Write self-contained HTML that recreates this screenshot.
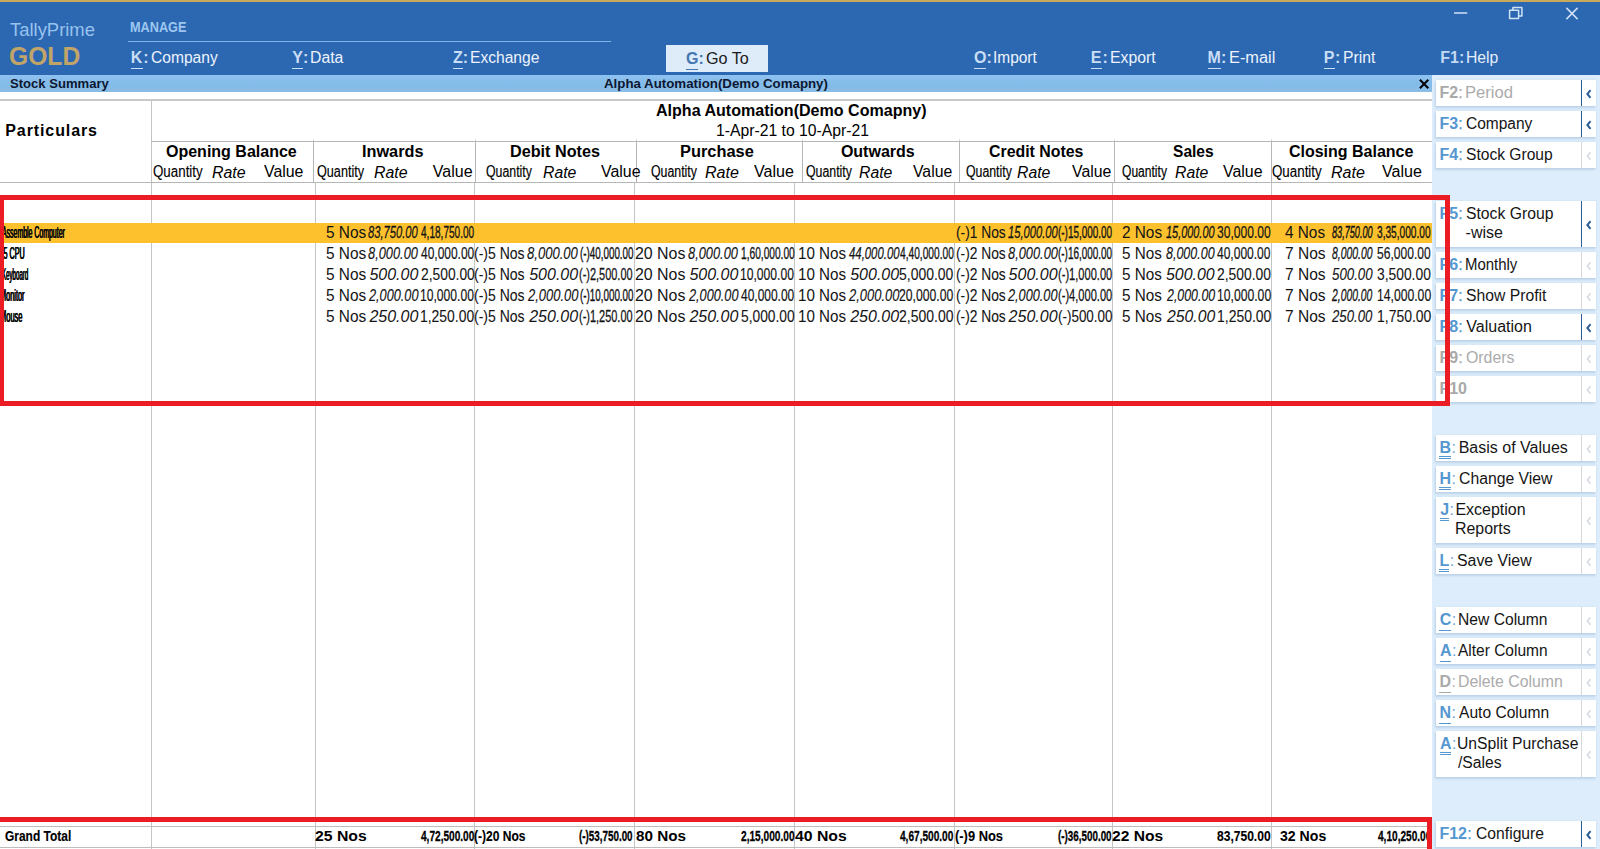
<!DOCTYPE html>
<html><head><meta charset="utf-8"><title>TallyPrime</title>
<style>
html,body{margin:0;padding:0;width:1600px;height:849px;overflow:hidden;background:#fff}
#root{position:absolute;left:0;top:0;width:1600px;height:849px;overflow:hidden;background:#fff;font-family:"Liberation Sans",sans-serif}
.btn{position:absolute;left:1436px;width:160px;background:#fff;box-shadow:-1px 2px 2px rgba(125,155,195,.30),0 0 2px rgba(125,155,195,.20)}
.sep{position:absolute;left:145px;top:0;bottom:0;width:1px}
</style></head><body><div id="root">
<div style="position:absolute;left:0px;top:0px;width:1600px;height:75px;background:#2C67B2;"></div>
<div style="position:absolute;left:0px;top:0px;width:1600px;height:2px;background:#C9A95C;"></div>
<div style="position:absolute;left:0px;top:75px;width:1432px;height:17px;background:#8CBCE8;background:linear-gradient(#8FC2F2 0%,#88BDEA 30%,#82BCE8 60%,#8CBCE4 100%);"></div>
<div style="position:absolute;left:1432px;top:75px;width:168px;height:774px;background:#DDEDFB;"></div>
<div style="position:absolute;left:128px;top:40.5px;width:483px;height:1px;background:#7FB4EA;"></div>
<div style="position:absolute;left:130.8px;top:68px;width:11.9547px;height:1px;background:#C9DEF5;"></div>
<div style="position:absolute;left:291.6px;top:68px;width:11.0719px;height:1px;background:#C9DEF5;"></div>
<div style="position:absolute;left:452.6px;top:68px;width:10.1734px;height:1px;background:#C9DEF5;"></div>
<div style="position:absolute;left:973.6px;top:68px;width:12.8453px;height:1px;background:#C9DEF5;"></div>
<div style="position:absolute;left:1090.8px;top:68px;width:11.0719px;height:1px;background:#C9DEF5;"></div>
<div style="position:absolute;left:1207.7px;top:68px;width:13.7281px;height:1px;background:#C9DEF5;"></div>
<div style="position:absolute;left:1323.8px;top:68px;width:11.0719px;height:1px;background:#C9DEF5;"></div>
<div style="position:absolute;left:666px;top:45px;width:102px;height:26.5px;background:#DEEBF9;"></div>
<div style="position:absolute;left:685.6px;top:69px;width:12.8453px;height:1px;background:#4478B2;"></div>
<svg style="position:absolute;left:1450px;top:2px" width="140" height="24" viewBox="0 0 140 24" fill="none" stroke="#CFE2F6" stroke-width="1.5"><path d="M4 11H17.3"/><path d="M59.6 8.3h9v8.3h-9z" stroke-linejoin="round"/><path d="M62.9 8.2V5.6h9v8.3h-3.1" stroke-linejoin="round"/><path d="M116.4 5.9l11.2 11.2M127.6 5.9l-11.2 11.2"/></svg>
<svg style="position:absolute;left:1418px;top:77px" width="13" height="13" viewBox="0 0 13 13" stroke="#05050a" stroke-width="2.1" fill="none"><path d="M1.9 2.8l8.4 8.4M10.3 2.8l-8.4 8.4"/></svg>
<div style="position:absolute;left:0px;top:99px;width:1432px;height:2px;background:#C9C9C9;"></div>
<div style="position:absolute;left:151px;top:101px;width:1px;height:748px;background:#C4C4C4;"></div>
<div style="position:absolute;left:151px;top:141px;width:1281px;height:1px;background:#B6B6B6;"></div>
<div style="position:absolute;left:313px;top:139px;width:1px;height:2px;background:#DADADA;"></div>
<div style="position:absolute;left:313px;top:141px;width:1px;height:41px;background:#B6B6B6;"></div>
<div style="position:absolute;left:475px;top:139px;width:1px;height:2px;background:#DADADA;"></div>
<div style="position:absolute;left:475px;top:141px;width:1px;height:41px;background:#B6B6B6;"></div>
<div style="position:absolute;left:636px;top:139px;width:1px;height:2px;background:#DADADA;"></div>
<div style="position:absolute;left:636px;top:141px;width:1px;height:41px;background:#B6B6B6;"></div>
<div style="position:absolute;left:802px;top:139px;width:1px;height:2px;background:#DADADA;"></div>
<div style="position:absolute;left:802px;top:141px;width:1px;height:41px;background:#B6B6B6;"></div>
<div style="position:absolute;left:959px;top:139px;width:1px;height:2px;background:#DADADA;"></div>
<div style="position:absolute;left:959px;top:141px;width:1px;height:41px;background:#B6B6B6;"></div>
<div style="position:absolute;left:1114px;top:139px;width:1px;height:2px;background:#DADADA;"></div>
<div style="position:absolute;left:1114px;top:141px;width:1px;height:41px;background:#B6B6B6;"></div>
<div style="position:absolute;left:1271px;top:139px;width:1px;height:2px;background:#DADADA;"></div>
<div style="position:absolute;left:1271px;top:141px;width:1px;height:41px;background:#B6B6B6;"></div>
<div style="position:absolute;left:0px;top:182px;width:1432px;height:1px;background:#B6B6B6;"></div>
<div style="position:absolute;left:315px;top:183px;width:1px;height:666px;background:#C4C4C4;"></div>
<div style="position:absolute;left:474px;top:183px;width:1px;height:666px;background:#C4C4C4;"></div>
<div style="position:absolute;left:633.5px;top:183px;width:1px;height:666px;background:#C4C4C4;"></div>
<div style="position:absolute;left:794px;top:183px;width:1px;height:666px;background:#C4C4C4;"></div>
<div style="position:absolute;left:954px;top:183px;width:1px;height:666px;background:#C4C4C4;"></div>
<div style="position:absolute;left:1112px;top:183px;width:1px;height:666px;background:#C4C4C4;"></div>
<div style="position:absolute;left:1271px;top:183px;width:1px;height:666px;background:#C4C4C4;"></div>
<div style="position:absolute;left:0px;top:826px;width:1432px;height:1px;background:#BDBDBD;"></div>
<div style="position:absolute;left:0px;top:847px;width:1432px;height:1px;background:#BDBDBD;"></div>
<div style="position:absolute;left:4px;top:223px;width:1428px;height:20px;background:#FDC12E;"></div>
<div class="btn" style="top:80px;height:26px"><div class="sep" style="background:#2F5E97"></div></div>
<svg style="position:absolute;left:1585.4px;top:88.1px" width="8" height="12" viewBox="0 0 8 12" fill="none" stroke="#2F5E97" stroke-width="2" stroke-linejoin="miter"><path d="M5.5 2.2L2.4 6l3.1 3.8"/></svg>
<div class="btn" style="top:111px;height:26px"><div class="sep" style="background:#2F5E97"></div></div>
<svg style="position:absolute;left:1585.4px;top:119.1px" width="8" height="12" viewBox="0 0 8 12" fill="none" stroke="#2F5E97" stroke-width="2" stroke-linejoin="miter"><path d="M5.5 2.2L2.4 6l3.1 3.8"/></svg>
<div class="btn" style="top:142px;height:26px"><div class="sep" style="background:#D5D8DC"></div></div>
<svg style="position:absolute;left:1585.4px;top:150.1px" width="8" height="12" viewBox="0 0 8 12" fill="none" stroke="#D3D9E0" stroke-width="1.5" stroke-linejoin="miter"><path d="M5.5 2.2L2.4 6l3.1 3.8"/></svg>
<div class="btn" style="top:201px;height:46px"><div class="sep" style="background:#2F5E97"></div></div>
<svg style="position:absolute;left:1585.4px;top:219.1px" width="8" height="12" viewBox="0 0 8 12" fill="none" stroke="#2F5E97" stroke-width="2" stroke-linejoin="miter"><path d="M5.5 2.2L2.4 6l3.1 3.8"/></svg>
<div class="btn" style="top:252px;height:26px"><div class="sep" style="background:#D5D8DC"></div></div>
<svg style="position:absolute;left:1585.4px;top:260.1px" width="8" height="12" viewBox="0 0 8 12" fill="none" stroke="#D3D9E0" stroke-width="1.5" stroke-linejoin="miter"><path d="M5.5 2.2L2.4 6l3.1 3.8"/></svg>
<div class="btn" style="top:283px;height:26px"><div class="sep" style="background:#D5D8DC"></div></div>
<svg style="position:absolute;left:1585.4px;top:291.1px" width="8" height="12" viewBox="0 0 8 12" fill="none" stroke="#D3D9E0" stroke-width="1.5" stroke-linejoin="miter"><path d="M5.5 2.2L2.4 6l3.1 3.8"/></svg>
<div class="btn" style="top:314px;height:26px"><div class="sep" style="background:#2F5E97"></div></div>
<svg style="position:absolute;left:1585.4px;top:322.1px" width="8" height="12" viewBox="0 0 8 12" fill="none" stroke="#2F5E97" stroke-width="2" stroke-linejoin="miter"><path d="M5.5 2.2L2.4 6l3.1 3.8"/></svg>
<div class="btn" style="top:345px;height:26px"><div class="sep" style="background:#D5D8DC"></div></div>
<svg style="position:absolute;left:1585.4px;top:353.1px" width="8" height="12" viewBox="0 0 8 12" fill="none" stroke="#D3D9E0" stroke-width="1.5" stroke-linejoin="miter"><path d="M5.5 2.2L2.4 6l3.1 3.8"/></svg>
<div class="btn" style="top:376px;height:26px"><div class="sep" style="background:#D5D8DC"></div></div>
<svg style="position:absolute;left:1585.4px;top:384.1px" width="8" height="12" viewBox="0 0 8 12" fill="none" stroke="#D3D9E0" stroke-width="1.5" stroke-linejoin="miter"><path d="M5.5 2.2L2.4 6l3.1 3.8"/></svg>
<div class="btn" style="top:435px;height:26px"><div class="sep" style="background:#D5D8DC"></div></div>
<svg style="position:absolute;left:1585.4px;top:443.1px" width="8" height="12" viewBox="0 0 8 12" fill="none" stroke="#D3D9E0" stroke-width="1.5" stroke-linejoin="miter"><path d="M5.5 2.2L2.4 6l3.1 3.8"/></svg>
<div style="position:absolute;left:1439px;top:456px;width:11.8547px;height:1px;background:#5597D0;"></div>
<div style="position:absolute;left:1439px;top:458px;width:11.8547px;height:1px;background:#5597D0;"></div>
<div class="btn" style="top:466px;height:26px"><div class="sep" style="background:#D5D8DC"></div></div>
<svg style="position:absolute;left:1585.4px;top:474.1px" width="8" height="12" viewBox="0 0 8 12" fill="none" stroke="#D3D9E0" stroke-width="1.5" stroke-linejoin="miter"><path d="M5.5 2.2L2.4 6l3.1 3.8"/></svg>
<div style="position:absolute;left:1439px;top:487px;width:11.8547px;height:1px;background:#5597D0;"></div>
<div style="position:absolute;left:1439px;top:489px;width:11.8547px;height:1px;background:#5597D0;"></div>
<div class="btn" style="top:497px;height:46px"><div class="sep" style="background:#D5D8DC"></div></div>
<svg style="position:absolute;left:1585.4px;top:515.1px" width="8" height="12" viewBox="0 0 8 12" fill="none" stroke="#D3D9E0" stroke-width="1.5" stroke-linejoin="miter"><path d="M5.5 2.2L2.4 6l3.1 3.8"/></svg>
<div style="position:absolute;left:1439.8px;top:518px;width:9.19844px;height:1px;background:#5597D0;"></div>
<div style="position:absolute;left:1439.8px;top:520px;width:9.19844px;height:1px;background:#5597D0;"></div>
<div class="btn" style="top:548px;height:26px"><div class="sep" style="background:#D5D8DC"></div></div>
<svg style="position:absolute;left:1585.4px;top:556.1px" width="8" height="12" viewBox="0 0 8 12" fill="none" stroke="#D3D9E0" stroke-width="1.5" stroke-linejoin="miter"><path d="M5.5 2.2L2.4 6l3.1 3.8"/></svg>
<div style="position:absolute;left:1439px;top:569px;width:10.0734px;height:1px;background:#5597D0;"></div>
<div style="position:absolute;left:1439px;top:571px;width:10.0734px;height:1px;background:#5597D0;"></div>
<div class="btn" style="top:607px;height:26px"><div class="sep" style="background:#D5D8DC"></div></div>
<svg style="position:absolute;left:1585.4px;top:615.1px" width="8" height="12" viewBox="0 0 8 12" fill="none" stroke="#D3D9E0" stroke-width="1.5" stroke-linejoin="miter"><path d="M5.5 2.2L2.4 6l3.1 3.8"/></svg>
<div style="position:absolute;left:1439.4px;top:630px;width:11.8547px;height:1px;background:#5597D0;"></div>
<div class="btn" style="top:638px;height:26px"><div class="sep" style="background:#D5D8DC"></div></div>
<svg style="position:absolute;left:1585.4px;top:646.1px" width="8" height="12" viewBox="0 0 8 12" fill="none" stroke="#D3D9E0" stroke-width="1.5" stroke-linejoin="miter"><path d="M5.5 2.2L2.4 6l3.1 3.8"/></svg>
<div style="position:absolute;left:1439.6px;top:661px;width:11.8547px;height:1px;background:#5597D0;"></div>
<div class="btn" style="top:669px;height:26px"><div class="sep" style="background:#D5D8DC"></div></div>
<svg style="position:absolute;left:1585.4px;top:677.1px" width="8" height="12" viewBox="0 0 8 12" fill="none" stroke="#D3D9E0" stroke-width="1.5" stroke-linejoin="miter"><path d="M5.5 2.2L2.4 6l3.1 3.8"/></svg>
<div style="position:absolute;left:1439px;top:692px;width:11.8547px;height:1px;background:#A9A9A9;"></div>
<div class="btn" style="top:700px;height:26px"><div class="sep" style="background:#D5D8DC"></div></div>
<svg style="position:absolute;left:1585.4px;top:708.1px" width="8" height="12" viewBox="0 0 8 12" fill="none" stroke="#D3D9E0" stroke-width="1.5" stroke-linejoin="miter"><path d="M5.5 2.2L2.4 6l3.1 3.8"/></svg>
<div style="position:absolute;left:1439px;top:723px;width:11.8547px;height:1px;background:#5597D0;"></div>
<div class="btn" style="top:731px;height:46px"><div class="sep" style="background:#D5D8DC"></div></div>
<svg style="position:absolute;left:1585.4px;top:749.1px" width="8" height="12" viewBox="0 0 8 12" fill="none" stroke="#D3D9E0" stroke-width="1.5" stroke-linejoin="miter"><path d="M5.5 2.2L2.4 6l3.1 3.8"/></svg>
<div style="position:absolute;left:1439.6px;top:752px;width:11.8547px;height:1px;background:#5597D0;"></div>
<div style="position:absolute;left:1439.6px;top:754px;width:11.8547px;height:1px;background:#5597D0;"></div>
<div class="btn" style="top:821px;height:26px"><div class="sep" style="background:#2F5E97"></div></div>
<svg style="position:absolute;left:1585.4px;top:829.1px" width="8" height="12" viewBox="0 0 8 12" fill="none" stroke="#2F5E97" stroke-width="2" stroke-linejoin="miter"><path d="M5.5 2.2L2.4 6l3.1 3.8"/></svg>
<span style="position:absolute;white-space:pre;line-height:20px;font-size:17.5px;font-weight:400;font-style:normal;color:#97C2EE;left:9.65px;top:20px;transform:scaleX(1.0524);transform-origin:0 0;">TallyPrime</span>
<span style="position:absolute;white-space:pre;line-height:20px;font-size:25px;font-weight:700;font-style:normal;color:#C0A468;left:9.08px;top:46px;transform:scaleX(0.9856);transform-origin:0 0;">GOLD</span>
<span style="position:absolute;white-space:pre;line-height:20px;font-size:14px;font-weight:700;font-style:normal;color:#9CC6F0;left:129.71px;top:17px;transform:scaleX(0.9077);transform-origin:0 0;-webkit-text-stroke:0.06px #9CC6F0;">MANAGE</span>
<span style="position:absolute;white-space:pre;line-height:20px;font-size:16px;font-weight:700;font-style:normal;color:#C9DEF5;left:130.70px;top:48px;">K</span>
<span style="position:absolute;white-space:pre;line-height:20px;font-size:16px;font-weight:700;font-style:normal;color:#C9DEF5;left:143.30px;top:48px;">:</span>
<span style="position:absolute;white-space:pre;line-height:20px;font-size:16px;font-weight:400;font-style:normal;color:#ECF3FC;left:151.22px;top:48px;transform:scaleX(0.9749);transform-origin:0 0;">Company</span>
<span style="position:absolute;white-space:pre;line-height:20px;font-size:16px;font-weight:700;font-style:normal;color:#C9DEF5;left:292.30px;top:48px;">Y</span>
<span style="position:absolute;white-space:pre;line-height:20px;font-size:16px;font-weight:700;font-style:normal;color:#C9DEF5;left:303.10px;top:48px;">:</span>
<span style="position:absolute;white-space:pre;line-height:20px;font-size:16px;font-weight:400;font-style:normal;color:#ECF3FC;left:309.72px;top:48px;transform:scaleX(0.9846);transform-origin:0 0;">Data</span>
<span style="position:absolute;white-space:pre;line-height:20px;font-size:16px;font-weight:700;font-style:normal;color:#C9DEF5;left:453.10px;top:48px;">Z</span>
<span style="position:absolute;white-space:pre;line-height:20px;font-size:16px;font-weight:700;font-style:normal;color:#C9DEF5;left:462.70px;top:48px;">:</span>
<span style="position:absolute;white-space:pre;line-height:20px;font-size:16px;font-weight:400;font-style:normal;color:#ECF3FC;left:470.23px;top:48px;transform:scaleX(0.9754);transform-origin:0 0;">Exchange</span>
<span style="position:absolute;white-space:pre;line-height:20px;font-size:16px;font-weight:700;font-style:normal;color:#C9DEF5;left:973.90px;top:48px;">O</span>
<span style="position:absolute;white-space:pre;line-height:20px;font-size:16px;font-weight:700;font-style:normal;color:#C9DEF5;left:986.40px;top:48px;">:</span>
<span style="position:absolute;white-space:pre;line-height:20px;font-size:16px;font-weight:400;font-style:normal;color:#ECF3FC;left:993.25px;top:48px;transform:scaleX(0.9658);transform-origin:0 0;-webkit-text-stroke:0.02px #ECF3FC;">Import</span>
<span style="position:absolute;white-space:pre;line-height:20px;font-size:16px;font-weight:700;font-style:normal;color:#C9DEF5;left:1090.70px;top:48px;">E</span>
<span style="position:absolute;white-space:pre;line-height:20px;font-size:16px;font-weight:700;font-style:normal;color:#C9DEF5;left:1102.40px;top:48px;">:</span>
<span style="position:absolute;white-space:pre;line-height:20px;font-size:16px;font-weight:400;font-style:normal;color:#ECF3FC;left:1109.72px;top:48px;transform:scaleX(0.9866);transform-origin:0 0;">Export</span>
<span style="position:absolute;white-space:pre;line-height:20px;font-size:16px;font-weight:700;font-style:normal;color:#C9DEF5;left:1207.60px;top:48px;">M</span>
<span style="position:absolute;white-space:pre;line-height:20px;font-size:16px;font-weight:700;font-style:normal;color:#C9DEF5;left:1220.90px;top:48px;">:</span>
<span style="position:absolute;white-space:pre;line-height:20px;font-size:16px;font-weight:400;font-style:normal;color:#ECF3FC;left:1228.67px;top:48px;transform:scaleX(1.0233);transform-origin:0 0;">E-mail</span>
<span style="position:absolute;white-space:pre;line-height:20px;font-size:16px;font-weight:700;font-style:normal;color:#C9DEF5;left:1323.70px;top:48px;">P</span>
<span style="position:absolute;white-space:pre;line-height:20px;font-size:16px;font-weight:700;font-style:normal;color:#C9DEF5;left:1335.10px;top:48px;">:</span>
<span style="position:absolute;white-space:pre;line-height:20px;font-size:16px;font-weight:400;font-style:normal;color:#ECF3FC;left:1343.02px;top:48px;transform:scaleX(0.9810);transform-origin:0 0;">Print</span>
<span style="position:absolute;white-space:pre;line-height:20px;font-size:16px;font-weight:700;font-style:normal;color:#C3DAF3;left:1440.30px;top:48px;">F1:</span>
<span style="position:absolute;white-space:pre;line-height:20px;font-size:16px;font-weight:400;font-style:normal;color:#E4EEFA;left:1466.22px;top:48px;transform:scaleX(0.9839);transform-origin:0 0;">Help</span>
<span style="position:absolute;white-space:pre;line-height:20px;font-size:16px;font-weight:700;font-style:normal;color:#4478B2;left:685.90px;top:49px;">G</span>
<span style="position:absolute;white-space:pre;line-height:20px;font-size:16px;font-weight:700;font-style:normal;color:#4478B2;left:698.40px;top:49px;">:</span>
<span style="position:absolute;white-space:pre;line-height:20px;font-size:16px;font-weight:400;font-style:normal;color:#1b1b1b;left:706.49px;top:49px;transform:scaleX(1.0098);transform-origin:0 0;">Go To</span>
<span style="position:absolute;white-space:pre;line-height:20px;font-size:13px;font-weight:700;font-style:normal;color:#0e1630;left:9.67px;top:74px;transform:scaleX(1.0061);transform-origin:0 0;">Stock Summary</span>
<span style="position:absolute;white-space:pre;line-height:20px;font-size:13px;font-weight:700;font-style:normal;color:#0e1630;left:603.67px;top:74px;transform:scaleX(1.0222);transform-origin:0 0;">Alpha Automation(Demo Comapny)</span>
<span style="position:absolute;white-space:pre;line-height:20px;font-size:16px;font-weight:700;font-style:normal;color:#000;letter-spacing:0.9px;left:5.30px;top:121px;">Particulars</span>
<span style="position:absolute;white-space:pre;line-height:20px;font-size:16px;font-weight:700;font-style:normal;color:#000;left:656.20px;top:101px;transform:scaleX(1.0034);transform-origin:0 0;">Alpha Automation(Demo Comapny)</span>
<span style="position:absolute;white-space:pre;line-height:20px;font-size:16px;font-weight:400;font-style:normal;color:#000;left:715.62px;top:121px;transform:scaleX(0.9837);transform-origin:0 0;">1-Apr-21 to 10-Apr-21</span>
<span style="position:absolute;white-space:pre;line-height:20px;font-size:16px;font-weight:700;font-style:normal;color:#000;left:166.00px;top:142px;">Opening Balance</span>
<span style="position:absolute;white-space:pre;line-height:20px;font-size:16px;font-weight:400;font-style:normal;color:#000;left:152.92px;top:162px;transform:scaleX(0.8336);transform-origin:0 0;-webkit-text-stroke:0.12px #000;">Quantity</span>
<span style="position:absolute;white-space:pre;line-height:20px;font-size:16px;font-weight:400;font-style:italic;color:#000;left:211.60px;top:163px;transform:scaleX(0.9939);transform-origin:0 0;">Rate</span>
<span style="position:absolute;white-space:pre;line-height:20px;font-size:16px;font-weight:400;font-style:normal;color:#000;left:263.90px;top:162px;transform:scaleX(0.9923);transform-origin:0 0;">Value</span>
<span style="position:absolute;white-space:pre;line-height:20px;font-size:16px;font-weight:700;font-style:normal;color:#000;left:362.38px;top:142px;transform:scaleX(1.0170);transform-origin:0 0;">Inwards</span>
<span style="position:absolute;white-space:pre;line-height:20px;font-size:16px;font-weight:400;font-style:normal;color:#000;left:316.95px;top:162px;transform:scaleX(0.7895);transform-origin:0 0;-webkit-text-stroke:0.16px #000;">Quantity</span>
<span style="position:absolute;white-space:pre;line-height:20px;font-size:16px;font-weight:400;font-style:italic;color:#000;left:373.80px;top:163px;transform:scaleX(0.9939);transform-origin:0 0;">Rate</span>
<span style="position:absolute;white-space:pre;line-height:20px;font-size:16px;font-weight:400;font-style:normal;color:#000;left:432.80px;top:162px;">Value</span>
<span style="position:absolute;white-space:pre;line-height:20px;font-size:16px;font-weight:700;font-style:normal;color:#000;left:510.19px;top:142px;transform:scaleX(1.0115);transform-origin:0 0;">Debit Notes</span>
<span style="position:absolute;white-space:pre;line-height:20px;font-size:16px;font-weight:400;font-style:normal;color:#000;left:485.96px;top:162px;transform:scaleX(0.7708);transform-origin:0 0;-webkit-text-stroke:0.18px #000;">Quantity</span>
<span style="position:absolute;white-space:pre;line-height:20px;font-size:16px;font-weight:400;font-style:italic;color:#000;left:542.81px;top:163px;transform:scaleX(0.9848);transform-origin:0 0;">Rate</span>
<span style="position:absolute;white-space:pre;line-height:20px;font-size:16px;font-weight:400;font-style:normal;color:#000;left:601.00px;top:162px;transform:scaleX(0.9949);transform-origin:0 0;">Value</span>
<span style="position:absolute;white-space:pre;line-height:20px;font-size:16px;font-weight:700;font-style:normal;color:#000;left:680.28px;top:142px;transform:scaleX(1.0241);transform-origin:0 0;">Purchase</span>
<span style="position:absolute;white-space:pre;line-height:20px;font-size:16px;font-weight:400;font-style:normal;color:#000;left:650.86px;top:162px;transform:scaleX(0.7708);transform-origin:0 0;-webkit-text-stroke:0.18px #000;">Quantity</span>
<span style="position:absolute;white-space:pre;line-height:20px;font-size:16px;font-weight:400;font-style:italic;color:#000;left:704.60px;top:163px;transform:scaleX(1.0030);transform-origin:0 0;">Rate</span>
<span style="position:absolute;white-space:pre;line-height:20px;font-size:16px;font-weight:400;font-style:normal;color:#000;left:753.50px;top:162px;transform:scaleX(1.0051);transform-origin:0 0;">Value</span>
<span style="position:absolute;white-space:pre;line-height:20px;font-size:16px;font-weight:700;font-style:normal;color:#000;left:840.90px;top:142px;">Outwards</span>
<span style="position:absolute;white-space:pre;line-height:20px;font-size:16px;font-weight:400;font-style:normal;color:#000;left:805.96px;top:162px;transform:scaleX(0.7708);transform-origin:0 0;-webkit-text-stroke:0.18px #000;">Quantity</span>
<span style="position:absolute;white-space:pre;line-height:20px;font-size:16px;font-weight:400;font-style:italic;color:#000;left:858.61px;top:163px;transform:scaleX(0.9848);transform-origin:0 0;">Rate</span>
<span style="position:absolute;white-space:pre;line-height:20px;font-size:16px;font-weight:400;font-style:normal;color:#000;left:912.70px;top:162px;transform:scaleX(0.9872);transform-origin:0 0;">Value</span>
<span style="position:absolute;white-space:pre;line-height:20px;font-size:16px;font-weight:700;font-style:normal;color:#000;left:989.00px;top:142px;transform:scaleX(0.9925);transform-origin:0 0;">Credit Notes</span>
<span style="position:absolute;white-space:pre;line-height:20px;font-size:16px;font-weight:400;font-style:normal;color:#000;left:965.76px;top:162px;transform:scaleX(0.7691);transform-origin:0 0;-webkit-text-stroke:0.18px #000;">Quantity</span>
<span style="position:absolute;white-space:pre;line-height:20px;font-size:16px;font-weight:400;font-style:italic;color:#000;left:1017.41px;top:163px;transform:scaleX(0.9848);transform-origin:0 0;">Rate</span>
<span style="position:absolute;white-space:pre;line-height:20px;font-size:16px;font-weight:400;font-style:normal;color:#000;left:1072.00px;top:162px;transform:scaleX(0.9897);transform-origin:0 0;">Value</span>
<span style="position:absolute;white-space:pre;line-height:20px;font-size:16px;font-weight:700;font-style:normal;color:#000;left:1173.11px;top:142px;transform:scaleX(0.9730);transform-origin:0 0;">Sales</span>
<span style="position:absolute;white-space:pre;line-height:20px;font-size:16px;font-weight:400;font-style:normal;color:#000;left:1121.97px;top:162px;transform:scaleX(0.7538);transform-origin:0 0;-webkit-text-stroke:0.20px #000;">Quantity</span>
<span style="position:absolute;white-space:pre;line-height:20px;font-size:16px;font-weight:400;font-style:italic;color:#000;left:1174.71px;top:163px;transform:scaleX(0.9848);transform-origin:0 0;">Rate</span>
<span style="position:absolute;white-space:pre;line-height:20px;font-size:16px;font-weight:400;font-style:normal;color:#000;left:1222.50px;top:162px;transform:scaleX(0.9949);transform-origin:0 0;">Value</span>
<span style="position:absolute;white-space:pre;line-height:20px;font-size:16px;font-weight:700;font-style:normal;color:#000;left:1288.90px;top:142px;">Closing Balance</span>
<span style="position:absolute;white-space:pre;line-height:20px;font-size:16px;font-weight:400;font-style:normal;color:#000;left:1272.42px;top:162px;transform:scaleX(0.8336);transform-origin:0 0;-webkit-text-stroke:0.12px #000;">Quantity</span>
<span style="position:absolute;white-space:pre;line-height:20px;font-size:16px;font-weight:400;font-style:italic;color:#000;left:1331.40px;top:163px;transform:scaleX(1.0030);transform-origin:0 0;">Rate</span>
<span style="position:absolute;white-space:pre;line-height:20px;font-size:16px;font-weight:400;font-style:normal;color:#000;left:1382.30px;top:162px;transform:scaleX(1.0051);transform-origin:0 0;">Value</span>
<span style="position:absolute;white-space:pre;line-height:20px;font-size:16px;font-weight:400;font-style:normal;color:#0a0a0a;left:1.80px;top:223px;transform:scaleX(0.4333);transform-origin:0 0;-webkit-text-stroke:0.20px #0a0a0a;text-shadow:0.55px 0 0 #111,-0.55px 0 0 #111;">Assemble Computer</span>
<span style="position:absolute;white-space:pre;line-height:20px;font-size:16px;font-weight:400;font-style:normal;color:#0a0a0a;left:1.75px;top:244px;transform:scaleX(0.4495);transform-origin:0 0;-webkit-text-stroke:0.20px #0a0a0a;text-shadow:0.55px 0 0 #111,-0.55px 0 0 #111;">i5 CPU</span>
<span style="position:absolute;white-space:pre;line-height:20px;font-size:16px;font-weight:400;font-style:normal;color:#0a0a0a;left:1.70px;top:265px;transform:scaleX(0.3837);transform-origin:0 0;-webkit-text-stroke:0.20px #0a0a0a;text-shadow:0.55px 0 0 #111,-0.55px 0 0 #111;">Keyboard</span>
<span style="position:absolute;white-space:pre;line-height:20px;font-size:16px;font-weight:400;font-style:normal;color:#0a0a0a;left:0.20px;top:286px;transform:scaleX(0.4595);transform-origin:0 0;-webkit-text-stroke:0.20px #0a0a0a;text-shadow:0.55px 0 0 #111,-0.55px 0 0 #111;">Monitor</span>
<span style="position:absolute;white-space:pre;line-height:20px;font-size:16px;font-weight:400;font-style:normal;color:#0a0a0a;left:-0.31px;top:307px;transform:scaleX(0.4674);transform-origin:0 0;-webkit-text-stroke:0.20px #0a0a0a;text-shadow:0.55px 0 0 #111,-0.55px 0 0 #111;">Mouse</span>
<span style="position:absolute;white-space:pre;line-height:20px;font-size:16px;font-weight:400;font-style:normal;color:#141414;left:325.92px;top:223px;transform:scaleX(0.9631);transform-origin:0 0;-webkit-text-stroke:0.02px #141414;">5 Nos</span>
<span style="position:absolute;white-space:pre;line-height:20px;font-size:16px;font-weight:400;font-style:italic;color:#141414;left:368.42px;top:223px;transform:scaleX(0.7001);transform-origin:0 0;-webkit-text-stroke:0.26px #141414;">83,750.00</span>
<span style="position:absolute;white-space:pre;line-height:20px;font-size:16px;font-weight:400;font-style:normal;color:#141414;left:421.11px;top:223px;transform:scaleX(0.6292);transform-origin:0 0;-webkit-text-stroke:0.35px #141414;">4,18,750.00</span>
<span style="position:absolute;white-space:pre;line-height:20px;font-size:16px;font-weight:400;font-style:normal;color:#141414;left:955.53px;top:223px;transform:scaleX(0.8599);transform-origin:0 0;-webkit-text-stroke:0.10px #141414;">(-)1 Nos</span>
<span style="position:absolute;white-space:pre;line-height:20px;font-size:16px;font-weight:400;font-style:italic;color:#141414;left:1007.62px;top:223px;transform:scaleX(0.7001);transform-origin:0 0;-webkit-text-stroke:0.26px #141414;">15,000.00</span>
<span style="position:absolute;white-space:pre;line-height:20px;font-size:16px;font-weight:400;font-style:normal;color:#141414;left:1057.84px;top:223px;transform:scaleX(0.6208);transform-origin:0 0;-webkit-text-stroke:0.37px #141414;">(-)15,000.00</span>
<span style="position:absolute;white-space:pre;line-height:20px;font-size:16px;font-weight:400;font-style:normal;color:#141414;left:1121.93px;top:223px;transform:scaleX(0.9580);transform-origin:0 0;-webkit-text-stroke:0.03px #141414;">2 Nos</span>
<span style="position:absolute;white-space:pre;line-height:20px;font-size:16px;font-weight:400;font-style:italic;color:#141414;left:1166.23px;top:223px;transform:scaleX(0.6818);transform-origin:0 0;-webkit-text-stroke:0.28px #141414;">15,000.00</span>
<span style="position:absolute;white-space:pre;line-height:20px;font-size:16px;font-weight:400;font-style:normal;color:#141414;left:1217.15px;top:223px;transform:scaleX(0.7543);transform-origin:0 0;-webkit-text-stroke:0.20px #141414;">30,000.00</span>
<span style="position:absolute;white-space:pre;line-height:20px;font-size:16px;font-weight:400;font-style:normal;color:#141414;left:1285.41px;top:223px;transform:scaleX(0.9585);transform-origin:0 0;-webkit-text-stroke:0.03px #141414;">4 Nos</span>
<span style="position:absolute;white-space:pre;line-height:20px;font-size:16px;font-weight:400;font-style:italic;color:#141414;left:1331.57px;top:223px;transform:scaleX(0.5700);transform-origin:0 0;-webkit-text-stroke:0.45px #141414;">83,750.00</span>
<span style="position:absolute;white-space:pre;line-height:20px;font-size:16px;font-weight:400;font-style:normal;color:#141414;left:1377.42px;top:223px;transform:scaleX(0.6339);transform-origin:0 0;-webkit-text-stroke:0.35px #141414;">3,35,000.00</span>
<span style="position:absolute;white-space:pre;line-height:20px;font-size:16px;font-weight:400;font-style:normal;color:#141414;left:325.92px;top:244px;transform:scaleX(0.9631);transform-origin:0 0;-webkit-text-stroke:0.02px #141414;">5 Nos</span>
<span style="position:absolute;white-space:pre;line-height:20px;font-size:16px;font-weight:400;font-style:italic;color:#141414;left:368.38px;top:244px;transform:scaleX(0.8010);transform-origin:0 0;-webkit-text-stroke:0.15px #141414;">8,000.00</span>
<span style="position:absolute;white-space:pre;line-height:20px;font-size:16px;font-weight:400;font-style:normal;color:#141414;left:421.08px;top:244px;transform:scaleX(0.7482);transform-origin:0 0;-webkit-text-stroke:0.20px #141414;">40,000.00</span>
<span style="position:absolute;white-space:pre;line-height:20px;font-size:16px;font-weight:400;font-style:normal;color:#141414;left:474.21px;top:244px;transform:scaleX(0.8759);transform-origin:0 0;-webkit-text-stroke:0.09px #141414;">(-)5 Nos</span>
<span style="position:absolute;white-space:pre;line-height:20px;font-size:16px;font-weight:400;font-style:italic;color:#141414;left:527.17px;top:244px;transform:scaleX(0.8172);transform-origin:0 0;-webkit-text-stroke:0.13px #141414;">8,000.00</span>
<span style="position:absolute;white-space:pre;line-height:20px;font-size:16px;font-weight:400;font-style:normal;color:#141414;left:579.55px;top:244px;transform:scaleX(0.6138);transform-origin:0 0;-webkit-text-stroke:0.38px #141414;">(-)40,000.00</span>
<span style="position:absolute;white-space:pre;line-height:20px;font-size:16px;font-weight:400;font-style:normal;color:#141414;left:635.40px;top:244px;transform:scaleX(0.9939);transform-origin:0 0;">20 Nos</span>
<span style="position:absolute;white-space:pre;line-height:20px;font-size:16px;font-weight:400;font-style:italic;color:#141414;left:688.38px;top:244px;transform:scaleX(0.8010);transform-origin:0 0;-webkit-text-stroke:0.15px #141414;">8,000.00</span>
<span style="position:absolute;white-space:pre;line-height:20px;font-size:16px;font-weight:400;font-style:normal;color:#141414;left:740.54px;top:244px;transform:scaleX(0.6360);transform-origin:0 0;-webkit-text-stroke:0.34px #141414;">1,60,000.00</span>
<span style="position:absolute;white-space:pre;line-height:20px;font-size:16px;font-weight:400;font-style:normal;color:#141414;left:797.86px;top:244px;transform:scaleX(0.9490);transform-origin:0 0;-webkit-text-stroke:0.03px #141414;">10 Nos</span>
<span style="position:absolute;white-space:pre;line-height:20px;font-size:16px;font-weight:400;font-style:italic;color:#141414;left:848.53px;top:244px;transform:scaleX(0.7099);transform-origin:0 0;-webkit-text-stroke:0.25px #141414;">44,000.00</span>
<span style="position:absolute;white-space:pre;line-height:20px;font-size:16px;font-weight:400;font-style:normal;color:#141414;left:899.81px;top:244px;transform:scaleX(0.6376);transform-origin:0 0;-webkit-text-stroke:0.34px #141414;">4,40,000.00</span>
<span style="position:absolute;white-space:pre;line-height:20px;font-size:16px;font-weight:400;font-style:normal;color:#141414;left:955.53px;top:244px;transform:scaleX(0.8599);transform-origin:0 0;-webkit-text-stroke:0.10px #141414;">(-)2 Nos</span>
<span style="position:absolute;white-space:pre;line-height:20px;font-size:16px;font-weight:400;font-style:italic;color:#141414;left:1007.58px;top:244px;transform:scaleX(0.8010);transform-origin:0 0;-webkit-text-stroke:0.15px #141414;">8,000.00</span>
<span style="position:absolute;white-space:pre;line-height:20px;font-size:16px;font-weight:400;font-style:normal;color:#141414;left:1057.84px;top:244px;transform:scaleX(0.6208);transform-origin:0 0;-webkit-text-stroke:0.37px #141414;">(-)16,000.00</span>
<span style="position:absolute;white-space:pre;line-height:20px;font-size:16px;font-weight:400;font-style:normal;color:#141414;left:1122.13px;top:244px;transform:scaleX(0.9533);transform-origin:0 0;-webkit-text-stroke:0.03px #141414;">5 Nos</span>
<span style="position:absolute;white-space:pre;line-height:20px;font-size:16px;font-weight:400;font-style:italic;color:#141414;left:1166.19px;top:244px;transform:scaleX(0.7799);transform-origin:0 0;-webkit-text-stroke:0.17px #141414;">8,000.00</span>
<span style="position:absolute;white-space:pre;line-height:20px;font-size:16px;font-weight:400;font-style:normal;color:#141414;left:1217.37px;top:244px;transform:scaleX(0.7511);transform-origin:0 0;-webkit-text-stroke:0.20px #141414;">40,000.00</span>
<span style="position:absolute;white-space:pre;line-height:20px;font-size:16px;font-weight:400;font-style:normal;color:#141414;left:1284.92px;top:244px;transform:scaleX(0.9704);transform-origin:0 0;">7 Nos</span>
<span style="position:absolute;white-space:pre;line-height:20px;font-size:16px;font-weight:400;font-style:italic;color:#141414;left:1331.54px;top:244px;transform:scaleX(0.6521);transform-origin:0 0;-webkit-text-stroke:0.32px #141414;">8,000.00</span>
<span style="position:absolute;white-space:pre;line-height:20px;font-size:16px;font-weight:400;font-style:normal;color:#141414;left:1377.35px;top:244px;transform:scaleX(0.7543);transform-origin:0 0;-webkit-text-stroke:0.20px #141414;">56,000.00</span>
<span style="position:absolute;white-space:pre;line-height:20px;font-size:16px;font-weight:400;font-style:normal;color:#141414;left:325.92px;top:265px;transform:scaleX(0.9631);transform-origin:0 0;-webkit-text-stroke:0.02px #141414;">5 Nos</span>
<span style="position:absolute;white-space:pre;line-height:20px;font-size:16px;font-weight:400;font-style:italic;color:#141414;left:369.40px;top:265px;">500.00</span>
<span style="position:absolute;white-space:pre;line-height:20px;font-size:16px;font-weight:400;font-style:normal;color:#141414;left:420.61px;top:265px;transform:scaleX(0.8637);transform-origin:0 0;-webkit-text-stroke:0.09px #141414;">2,500.00</span>
<span style="position:absolute;white-space:pre;line-height:20px;font-size:16px;font-weight:400;font-style:normal;color:#141414;left:474.21px;top:265px;transform:scaleX(0.8759);transform-origin:0 0;-webkit-text-stroke:0.09px #141414;">(-)5 Nos</span>
<span style="position:absolute;white-space:pre;line-height:20px;font-size:16px;font-weight:400;font-style:italic;color:#141414;left:529.20px;top:265px;">500.00</span>
<span style="position:absolute;white-space:pre;line-height:20px;font-size:16px;font-weight:400;font-style:normal;color:#141414;left:579.48px;top:265px;transform:scaleX(0.6849);transform-origin:0 0;-webkit-text-stroke:0.28px #141414;">(-)2,500.00</span>
<span style="position:absolute;white-space:pre;line-height:20px;font-size:16px;font-weight:400;font-style:normal;color:#141414;left:635.40px;top:265px;transform:scaleX(0.9939);transform-origin:0 0;">20 Nos</span>
<span style="position:absolute;white-space:pre;line-height:20px;font-size:16px;font-weight:400;font-style:italic;color:#141414;left:689.40px;top:265px;">500.00</span>
<span style="position:absolute;white-space:pre;line-height:20px;font-size:16px;font-weight:400;font-style:normal;color:#141414;left:740.39px;top:265px;transform:scaleX(0.7579);transform-origin:0 0;-webkit-text-stroke:0.19px #141414;">10,000.00</span>
<span style="position:absolute;white-space:pre;line-height:20px;font-size:16px;font-weight:400;font-style:normal;color:#141414;left:797.86px;top:265px;transform:scaleX(0.9490);transform-origin:0 0;-webkit-text-stroke:0.03px #141414;">10 Nos</span>
<span style="position:absolute;white-space:pre;line-height:20px;font-size:16px;font-weight:400;font-style:italic;color:#141414;left:850.20px;top:265px;">500.00</span>
<span style="position:absolute;white-space:pre;line-height:20px;font-size:16px;font-weight:400;font-style:normal;color:#141414;left:899.48px;top:265px;transform:scaleX(0.8723);transform-origin:0 0;-webkit-text-stroke:0.09px #141414;">5,000.00</span>
<span style="position:absolute;white-space:pre;line-height:20px;font-size:16px;font-weight:400;font-style:normal;color:#141414;left:955.53px;top:265px;transform:scaleX(0.8599);transform-origin:0 0;-webkit-text-stroke:0.10px #141414;">(-)2 Nos</span>
<span style="position:absolute;white-space:pre;line-height:20px;font-size:16px;font-weight:400;font-style:italic;color:#141414;left:1008.60px;top:265px;">500.00</span>
<span style="position:absolute;white-space:pre;line-height:20px;font-size:16px;font-weight:400;font-style:normal;color:#141414;left:1057.78px;top:265px;transform:scaleX(0.6927);transform-origin:0 0;-webkit-text-stroke:0.27px #141414;">(-)1,000.00</span>
<span style="position:absolute;white-space:pre;line-height:20px;font-size:16px;font-weight:400;font-style:normal;color:#141414;left:1122.13px;top:265px;transform:scaleX(0.9533);transform-origin:0 0;-webkit-text-stroke:0.03px #141414;">5 Nos</span>
<span style="position:absolute;white-space:pre;line-height:20px;font-size:16px;font-weight:400;font-style:italic;color:#141414;left:1166.20px;top:265px;transform:scaleX(0.9938);transform-origin:0 0;">500.00</span>
<span style="position:absolute;white-space:pre;line-height:20px;font-size:16px;font-weight:400;font-style:normal;color:#141414;left:1216.91px;top:265px;transform:scaleX(0.8670);transform-origin:0 0;-webkit-text-stroke:0.09px #141414;">2,500.00</span>
<span style="position:absolute;white-space:pre;line-height:20px;font-size:16px;font-weight:400;font-style:normal;color:#141414;left:1284.92px;top:265px;transform:scaleX(0.9704);transform-origin:0 0;">7 Nos</span>
<span style="position:absolute;white-space:pre;line-height:20px;font-size:16px;font-weight:400;font-style:italic;color:#141414;left:1331.55px;top:265px;transform:scaleX(0.8309);transform-origin:0 0;-webkit-text-stroke:0.12px #141414;">500.00</span>
<span style="position:absolute;white-space:pre;line-height:20px;font-size:16px;font-weight:400;font-style:normal;color:#141414;left:1377.28px;top:265px;transform:scaleX(0.8642);transform-origin:0 0;-webkit-text-stroke:0.09px #141414;">3,500.00</span>
<span style="position:absolute;white-space:pre;line-height:20px;font-size:16px;font-weight:400;font-style:normal;color:#141414;left:325.92px;top:286px;transform:scaleX(0.9631);transform-origin:0 0;-webkit-text-stroke:0.02px #141414;">5 Nos</span>
<span style="position:absolute;white-space:pre;line-height:20px;font-size:16px;font-weight:400;font-style:italic;color:#141414;left:368.78px;top:286px;transform:scaleX(0.7945);transform-origin:0 0;-webkit-text-stroke:0.16px #141414;">2,000.00</span>
<span style="position:absolute;white-space:pre;line-height:20px;font-size:16px;font-weight:400;font-style:normal;color:#141414;left:420.39px;top:286px;transform:scaleX(0.7579);transform-origin:0 0;-webkit-text-stroke:0.19px #141414;">10,000.00</span>
<span style="position:absolute;white-space:pre;line-height:20px;font-size:16px;font-weight:400;font-style:normal;color:#141414;left:474.21px;top:286px;transform:scaleX(0.8759);transform-origin:0 0;-webkit-text-stroke:0.09px #141414;">(-)5 Nos</span>
<span style="position:absolute;white-space:pre;line-height:20px;font-size:16px;font-weight:400;font-style:italic;color:#141414;left:527.58px;top:286px;transform:scaleX(0.8106);transform-origin:0 0;-webkit-text-stroke:0.14px #141414;">2,000.00</span>
<span style="position:absolute;white-space:pre;line-height:20px;font-size:16px;font-weight:400;font-style:normal;color:#141414;left:579.55px;top:286px;transform:scaleX(0.6138);transform-origin:0 0;-webkit-text-stroke:0.38px #141414;">(-)10,000.00</span>
<span style="position:absolute;white-space:pre;line-height:20px;font-size:16px;font-weight:400;font-style:normal;color:#141414;left:635.40px;top:286px;transform:scaleX(0.9939);transform-origin:0 0;">20 Nos</span>
<span style="position:absolute;white-space:pre;line-height:20px;font-size:16px;font-weight:400;font-style:italic;color:#141414;left:688.78px;top:286px;transform:scaleX(0.7945);transform-origin:0 0;-webkit-text-stroke:0.16px #141414;">2,000.00</span>
<span style="position:absolute;white-space:pre;line-height:20px;font-size:16px;font-weight:400;font-style:normal;color:#141414;left:741.08px;top:286px;transform:scaleX(0.7482);transform-origin:0 0;-webkit-text-stroke:0.20px #141414;">40,000.00</span>
<span style="position:absolute;white-space:pre;line-height:20px;font-size:16px;font-weight:400;font-style:normal;color:#141414;left:797.86px;top:286px;transform:scaleX(0.9490);transform-origin:0 0;-webkit-text-stroke:0.03px #141414;">10 Nos</span>
<span style="position:absolute;white-space:pre;line-height:20px;font-size:16px;font-weight:400;font-style:italic;color:#141414;left:848.68px;top:286px;transform:scaleX(0.8090);transform-origin:0 0;-webkit-text-stroke:0.14px #141414;">2,000.00</span>
<span style="position:absolute;white-space:pre;line-height:20px;font-size:16px;font-weight:400;font-style:normal;color:#141414;left:899.39px;top:286px;transform:scaleX(0.7636);transform-origin:0 0;-webkit-text-stroke:0.19px #141414;">20,000.00</span>
<span style="position:absolute;white-space:pre;line-height:20px;font-size:16px;font-weight:400;font-style:normal;color:#141414;left:955.53px;top:286px;transform:scaleX(0.8599);transform-origin:0 0;-webkit-text-stroke:0.10px #141414;">(-)2 Nos</span>
<span style="position:absolute;white-space:pre;line-height:20px;font-size:16px;font-weight:400;font-style:italic;color:#141414;left:1007.98px;top:286px;transform:scaleX(0.7945);transform-origin:0 0;-webkit-text-stroke:0.16px #141414;">2,000.00</span>
<span style="position:absolute;white-space:pre;line-height:20px;font-size:16px;font-weight:400;font-style:normal;color:#141414;left:1057.78px;top:286px;transform:scaleX(0.6927);transform-origin:0 0;-webkit-text-stroke:0.27px #141414;">(-)4,000.00</span>
<span style="position:absolute;white-space:pre;line-height:20px;font-size:16px;font-weight:400;font-style:normal;color:#141414;left:1122.13px;top:286px;transform:scaleX(0.9533);transform-origin:0 0;-webkit-text-stroke:0.03px #141414;">5 Nos</span>
<span style="position:absolute;white-space:pre;line-height:20px;font-size:16px;font-weight:400;font-style:italic;color:#141414;left:1166.58px;top:286px;transform:scaleX(0.7737);transform-origin:0 0;-webkit-text-stroke:0.18px #141414;">2,000.00</span>
<span style="position:absolute;white-space:pre;line-height:20px;font-size:16px;font-weight:400;font-style:normal;color:#141414;left:1216.69px;top:286px;transform:scaleX(0.7608);transform-origin:0 0;-webkit-text-stroke:0.19px #141414;">10,000.00</span>
<span style="position:absolute;white-space:pre;line-height:20px;font-size:16px;font-weight:400;font-style:normal;color:#141414;left:1284.92px;top:286px;transform:scaleX(0.9704);transform-origin:0 0;">7 Nos</span>
<span style="position:absolute;white-space:pre;line-height:20px;font-size:16px;font-weight:400;font-style:italic;color:#141414;left:1331.86px;top:286px;transform:scaleX(0.6469);transform-origin:0 0;-webkit-text-stroke:0.33px #141414;">2,000.00</span>
<span style="position:absolute;white-space:pre;line-height:20px;font-size:16px;font-weight:400;font-style:normal;color:#141414;left:1376.89px;top:286px;transform:scaleX(0.7608);transform-origin:0 0;-webkit-text-stroke:0.19px #141414;">14,000.00</span>
<span style="position:absolute;white-space:pre;line-height:20px;font-size:16px;font-weight:400;font-style:normal;color:#141414;left:325.92px;top:307px;transform:scaleX(0.9631);transform-origin:0 0;-webkit-text-stroke:0.02px #141414;">5 Nos</span>
<span style="position:absolute;white-space:pre;line-height:20px;font-size:16px;font-weight:400;font-style:italic;color:#141414;left:369.40px;top:307px;">250.00</span>
<span style="position:absolute;white-space:pre;line-height:20px;font-size:16px;font-weight:400;font-style:normal;color:#141414;left:420.26px;top:307px;transform:scaleX(0.8694);transform-origin:0 0;-webkit-text-stroke:0.09px #141414;">1,250.00</span>
<span style="position:absolute;white-space:pre;line-height:20px;font-size:16px;font-weight:400;font-style:normal;color:#141414;left:474.21px;top:307px;transform:scaleX(0.8759);transform-origin:0 0;-webkit-text-stroke:0.09px #141414;">(-)5 Nos</span>
<span style="position:absolute;white-space:pre;line-height:20px;font-size:16px;font-weight:400;font-style:italic;color:#141414;left:529.20px;top:307px;">250.00</span>
<span style="position:absolute;white-space:pre;line-height:20px;font-size:16px;font-weight:400;font-style:normal;color:#141414;left:579.48px;top:307px;transform:scaleX(0.6849);transform-origin:0 0;-webkit-text-stroke:0.28px #141414;">(-)1,250.00</span>
<span style="position:absolute;white-space:pre;line-height:20px;font-size:16px;font-weight:400;font-style:normal;color:#141414;left:635.40px;top:307px;transform:scaleX(0.9939);transform-origin:0 0;">20 Nos</span>
<span style="position:absolute;white-space:pre;line-height:20px;font-size:16px;font-weight:400;font-style:italic;color:#141414;left:689.40px;top:307px;">250.00</span>
<span style="position:absolute;white-space:pre;line-height:20px;font-size:16px;font-weight:400;font-style:normal;color:#141414;left:740.78px;top:307px;transform:scaleX(0.8609);transform-origin:0 0;-webkit-text-stroke:0.10px #141414;">5,000.00</span>
<span style="position:absolute;white-space:pre;line-height:20px;font-size:16px;font-weight:400;font-style:normal;color:#141414;left:797.86px;top:307px;transform:scaleX(0.9490);transform-origin:0 0;-webkit-text-stroke:0.03px #141414;">10 Nos</span>
<span style="position:absolute;white-space:pre;line-height:20px;font-size:16px;font-weight:400;font-style:italic;color:#141414;left:850.20px;top:307px;">250.00</span>
<span style="position:absolute;white-space:pre;line-height:20px;font-size:16px;font-weight:400;font-style:normal;color:#141414;left:899.30px;top:307px;transform:scaleX(0.8752);transform-origin:0 0;-webkit-text-stroke:0.09px #141414;">2,500.00</span>
<span style="position:absolute;white-space:pre;line-height:20px;font-size:16px;font-weight:400;font-style:normal;color:#141414;left:955.53px;top:307px;transform:scaleX(0.8599);transform-origin:0 0;-webkit-text-stroke:0.10px #141414;">(-)2 Nos</span>
<span style="position:absolute;white-space:pre;line-height:20px;font-size:16px;font-weight:400;font-style:italic;color:#141414;left:1008.60px;top:307px;">250.00</span>
<span style="position:absolute;white-space:pre;line-height:20px;font-size:16px;font-weight:400;font-style:normal;color:#141414;left:1057.64px;top:307px;transform:scaleX(0.8391);transform-origin:0 0;-webkit-text-stroke:0.12px #141414;">(-)500.00</span>
<span style="position:absolute;white-space:pre;line-height:20px;font-size:16px;font-weight:400;font-style:normal;color:#141414;left:1122.13px;top:307px;transform:scaleX(0.9533);transform-origin:0 0;-webkit-text-stroke:0.03px #141414;">5 Nos</span>
<span style="position:absolute;white-space:pre;line-height:20px;font-size:16px;font-weight:400;font-style:italic;color:#141414;left:1166.60px;top:307px;transform:scaleX(0.9857);transform-origin:0 0;">250.00</span>
<span style="position:absolute;white-space:pre;line-height:20px;font-size:16px;font-weight:400;font-style:normal;color:#141414;left:1216.55px;top:307px;transform:scaleX(0.8727);transform-origin:0 0;-webkit-text-stroke:0.09px #141414;">1,250.00</span>
<span style="position:absolute;white-space:pre;line-height:20px;font-size:16px;font-weight:400;font-style:normal;color:#141414;left:1284.92px;top:307px;transform:scaleX(0.9704);transform-origin:0 0;">7 Nos</span>
<span style="position:absolute;white-space:pre;line-height:20px;font-size:16px;font-weight:400;font-style:italic;color:#141414;left:1331.88px;top:307px;transform:scaleX(0.8241);transform-origin:0 0;-webkit-text-stroke:0.13px #141414;">250.00</span>
<span style="position:absolute;white-space:pre;line-height:20px;font-size:16px;font-weight:400;font-style:normal;color:#141414;left:1376.75px;top:307px;transform:scaleX(0.8727);transform-origin:0 0;-webkit-text-stroke:0.09px #141414;">1,750.00</span>
<span style="position:absolute;white-space:pre;line-height:20px;font-size:15px;font-weight:700;font-style:normal;color:#000;left:5.05px;top:826px;transform:scaleX(0.7979);transform-origin:0 0;-webkit-text-stroke:0.15px #000;">Grand Total</span>
<span style="position:absolute;white-space:pre;line-height:20px;font-size:15px;font-weight:700;font-style:normal;color:#000;left:315.01px;top:826px;transform:scaleX(1.0521);transform-origin:0 0;">25 Nos</span>
<span style="position:absolute;white-space:pre;line-height:20px;font-size:15px;font-weight:700;font-style:normal;color:#000;left:420.97px;top:826px;transform:scaleX(0.6729);transform-origin:0 0;-webkit-text-stroke:0.29px #000;">4,72,500.00</span>
<span style="position:absolute;white-space:pre;line-height:20px;font-size:15px;font-weight:700;font-style:normal;color:#000;left:474.47px;top:826px;transform:scaleX(0.8016);transform-origin:0 0;-webkit-text-stroke:0.15px #000;">(-)20 Nos</span>
<span style="position:absolute;white-space:pre;line-height:20px;font-size:15px;font-weight:700;font-style:normal;color:#000;left:579.47px;top:826px;transform:scaleX(0.6556);transform-origin:0 0;-webkit-text-stroke:0.32px #000;">(-)53,750.00</span>
<span style="position:absolute;white-space:pre;line-height:20px;font-size:15px;font-weight:700;font-style:normal;color:#000;left:636.02px;top:826px;transform:scaleX(1.0169);transform-origin:0 0;">80 Nos</span>
<span style="position:absolute;white-space:pre;line-height:20px;font-size:15px;font-weight:700;font-style:normal;color:#000;left:740.78px;top:826px;transform:scaleX(0.6753);transform-origin:0 0;-webkit-text-stroke:0.29px #000;">2,15,000.00</span>
<span style="position:absolute;white-space:pre;line-height:20px;font-size:15px;font-weight:700;font-style:normal;color:#000;left:795.30px;top:826px;transform:scaleX(1.0522);transform-origin:0 0;">40 Nos</span>
<span style="position:absolute;white-space:pre;line-height:20px;font-size:15px;font-weight:700;font-style:normal;color:#000;left:900.37px;top:826px;transform:scaleX(0.6729);transform-origin:0 0;-webkit-text-stroke:0.29px #000;">4,67,500.00</span>
<span style="position:absolute;white-space:pre;line-height:20px;font-size:15px;font-weight:700;font-style:normal;color:#000;left:954.94px;top:826px;transform:scaleX(0.8599);transform-origin:0 0;-webkit-text-stroke:0.10px #000;">(-)9 Nos</span>
<span style="position:absolute;white-space:pre;line-height:20px;font-size:15px;font-weight:700;font-style:normal;color:#000;left:1058.37px;top:826px;transform:scaleX(0.6556);transform-origin:0 0;-webkit-text-stroke:0.32px #000;">(-)36,500.00</span>
<span style="position:absolute;white-space:pre;line-height:20px;font-size:15px;font-weight:700;font-style:normal;color:#000;left:1112.01px;top:826px;transform:scaleX(1.0376);transform-origin:0 0;">22 Nos</span>
<span style="position:absolute;white-space:pre;line-height:20px;font-size:15px;font-weight:700;font-style:normal;color:#000;left:1217.22px;top:826px;transform:scaleX(0.8034);transform-origin:0 0;-webkit-text-stroke:0.15px #000;">83,750.00</span>
<span style="position:absolute;white-space:pre;line-height:20px;font-size:15px;font-weight:700;font-style:normal;color:#000;left:1279.74px;top:826px;transform:scaleX(0.9406);transform-origin:0 0;-webkit-text-stroke:0.04px #000;">32 Nos</span>
<span style="position:absolute;white-space:pre;line-height:20px;font-size:15px;font-weight:700;font-style:normal;color:#000;left:1377.67px;top:826px;transform:scaleX(0.6729);transform-origin:0 0;-webkit-text-stroke:0.29px #000;">4,10,250.00</span>
<span style="position:absolute;white-space:pre;line-height:20px;font-size:16px;font-weight:700;font-style:normal;color:#A9A9A9;left:1439.40px;top:83px;">F2</span>
<span style="position:absolute;white-space:pre;line-height:20px;font-size:16px;font-weight:400;font-style:normal;color:#A9A9A9;left:1458.37px;top:83px;-webkit-text-stroke:0.25px #A9A9A9;">:</span>
<span style="position:absolute;white-space:pre;line-height:20px;font-size:16px;font-weight:400;font-style:normal;color:#ABABAB;left:1465.45px;top:83px;transform:scaleX(1.0364);transform-origin:0 0;">Period</span>
<span style="position:absolute;white-space:pre;line-height:20px;font-size:16px;font-weight:700;font-style:normal;color:#5597D0;left:1439.40px;top:114px;">F3</span>
<span style="position:absolute;white-space:pre;line-height:20px;font-size:16px;font-weight:400;font-style:normal;color:#5597D0;left:1458.37px;top:114px;-webkit-text-stroke:0.25px #5597D0;">:</span>
<span style="position:absolute;white-space:pre;line-height:20px;font-size:16px;font-weight:400;font-style:normal;color:#151515;left:1466.02px;top:114px;transform:scaleX(0.9690);transform-origin:0 0;-webkit-text-stroke:0.02px #151515;">Company</span>
<span style="position:absolute;white-space:pre;line-height:20px;font-size:16px;font-weight:700;font-style:normal;color:#5597D0;left:1439.40px;top:145px;">F4</span>
<span style="position:absolute;white-space:pre;line-height:20px;font-size:16px;font-weight:400;font-style:normal;color:#5597D0;left:1458.37px;top:145px;-webkit-text-stroke:0.25px #5597D0;">:</span>
<span style="position:absolute;white-space:pre;line-height:20px;font-size:16px;font-weight:400;font-style:normal;color:#151515;left:1466.12px;top:145px;transform:scaleX(0.9749);transform-origin:0 0;">Stock Group</span>
<span style="position:absolute;white-space:pre;line-height:20px;font-size:16px;font-weight:700;font-style:normal;color:#5597D0;left:1439.40px;top:204px;">F5</span>
<span style="position:absolute;white-space:pre;line-height:20px;font-size:16px;font-weight:400;font-style:normal;color:#5597D0;left:1458.37px;top:204px;-webkit-text-stroke:0.25px #5597D0;">:</span>
<span style="position:absolute;white-space:pre;line-height:20px;font-size:16px;font-weight:400;font-style:normal;color:#151515;left:1465.61px;top:204px;transform:scaleX(0.9829);transform-origin:0 0;">Stock Group</span>
<span style="position:absolute;white-space:pre;line-height:20px;font-size:16px;font-weight:400;font-style:normal;color:#151515;left:1465.60px;top:223px;">-wise</span>
<span style="position:absolute;white-space:pre;line-height:20px;font-size:16px;font-weight:700;font-style:normal;color:#5597D0;left:1439.40px;top:255px;">F6</span>
<span style="position:absolute;white-space:pre;line-height:20px;font-size:16px;font-weight:400;font-style:normal;color:#5597D0;left:1458.37px;top:255px;-webkit-text-stroke:0.25px #5597D0;">:</span>
<span style="position:absolute;white-space:pre;line-height:20px;font-size:16px;font-weight:400;font-style:normal;color:#151515;left:1465.09px;top:255px;transform:scaleX(0.9342);transform-origin:0 0;-webkit-text-stroke:0.04px #151515;">Monthly</span>
<span style="position:absolute;white-space:pre;line-height:20px;font-size:16px;font-weight:700;font-style:normal;color:#5597D0;left:1439.40px;top:286px;">F7</span>
<span style="position:absolute;white-space:pre;line-height:20px;font-size:16px;font-weight:400;font-style:normal;color:#5597D0;left:1458.37px;top:286px;-webkit-text-stroke:0.25px #5597D0;">:</span>
<span style="position:absolute;white-space:pre;line-height:20px;font-size:16px;font-weight:400;font-style:normal;color:#151515;left:1465.61px;top:286px;transform:scaleX(0.9827);transform-origin:0 0;">Show Profit</span>
<span style="position:absolute;white-space:pre;line-height:20px;font-size:16px;font-weight:700;font-style:normal;color:#5597D0;left:1439.40px;top:317px;">F8</span>
<span style="position:absolute;white-space:pre;line-height:20px;font-size:16px;font-weight:400;font-style:normal;color:#5597D0;left:1458.37px;top:317px;-webkit-text-stroke:0.25px #5597D0;">:</span>
<span style="position:absolute;white-space:pre;line-height:20px;font-size:16px;font-weight:400;font-style:normal;color:#151515;left:1466.30px;top:317px;">Valuation</span>
<span style="position:absolute;white-space:pre;line-height:20px;font-size:16px;font-weight:700;font-style:normal;color:#A9A9A9;left:1439.40px;top:348px;">F9</span>
<span style="position:absolute;white-space:pre;line-height:20px;font-size:16px;font-weight:400;font-style:normal;color:#A9A9A9;left:1458.37px;top:348px;-webkit-text-stroke:0.25px #A9A9A9;">:</span>
<span style="position:absolute;white-space:pre;line-height:20px;font-size:16px;font-weight:400;font-style:normal;color:#ABABAB;left:1465.61px;top:348px;transform:scaleX(0.9916);transform-origin:0 0;">Orders</span>
<span style="position:absolute;white-space:pre;line-height:20px;font-size:16px;font-weight:700;font-style:normal;color:#A9A9A9;left:1439.40px;top:379px;">F10</span>
<span style="position:absolute;white-space:pre;line-height:20px;font-size:16px;font-weight:700;font-style:normal;color:#5597D0;left:1439.40px;top:438px;">B</span>
<span style="position:absolute;white-space:pre;line-height:20px;font-size:16px;font-weight:400;font-style:normal;color:#6FA6D9;left:1451.45px;top:438px;">:</span>
<span style="position:absolute;white-space:pre;line-height:20px;font-size:16px;font-weight:400;font-style:normal;color:#151515;left:1458.70px;top:438px;">Basis of Values</span>
<span style="position:absolute;white-space:pre;line-height:20px;font-size:16px;font-weight:700;font-style:normal;color:#5597D0;left:1439.40px;top:469px;">H</span>
<span style="position:absolute;white-space:pre;line-height:20px;font-size:16px;font-weight:400;font-style:normal;color:#6FA6D9;left:1451.45px;top:469px;">:</span>
<span style="position:absolute;white-space:pre;line-height:20px;font-size:16px;font-weight:400;font-style:normal;color:#151515;left:1458.91px;top:469px;transform:scaleX(0.9851);transform-origin:0 0;">Change View</span>
<span style="position:absolute;white-space:pre;line-height:20px;font-size:16px;font-weight:700;font-style:normal;color:#5597D0;left:1440.20px;top:500px;">J</span>
<span style="position:absolute;white-space:pre;line-height:20px;font-size:16px;font-weight:400;font-style:normal;color:#6FA6D9;left:1449.60px;top:500px;">:</span>
<span style="position:absolute;white-space:pre;line-height:20px;font-size:16px;font-weight:400;font-style:normal;color:#151515;left:1455.40px;top:500px;">Exception</span>
<span style="position:absolute;white-space:pre;line-height:20px;font-size:16px;font-weight:400;font-style:normal;color:#151515;left:1455.41px;top:519px;transform:scaleX(0.9945);transform-origin:0 0;">Reports</span>
<span style="position:absolute;white-space:pre;line-height:20px;font-size:16px;font-weight:700;font-style:normal;color:#5597D0;left:1439.40px;top:551px;">L</span>
<span style="position:absolute;white-space:pre;line-height:20px;font-size:16px;font-weight:400;font-style:normal;color:#6FA6D9;left:1449.67px;top:551px;">:</span>
<span style="position:absolute;white-space:pre;line-height:20px;font-size:16px;font-weight:400;font-style:normal;color:#151515;left:1456.71px;top:551px;transform:scaleX(0.9906);transform-origin:0 0;">Save View</span>
<span style="position:absolute;white-space:pre;line-height:20px;font-size:16px;font-weight:700;font-style:normal;color:#5597D0;left:1439.80px;top:610px;">C</span>
<span style="position:absolute;white-space:pre;line-height:20px;font-size:16px;font-weight:400;font-style:normal;color:#6FA6D9;left:1451.85px;top:610px;">:</span>
<span style="position:absolute;white-space:pre;line-height:20px;font-size:16px;font-weight:400;font-style:normal;color:#151515;left:1457.93px;top:610px;transform:scaleX(0.9776);transform-origin:0 0;">New Column</span>
<span style="position:absolute;white-space:pre;line-height:20px;font-size:16px;font-weight:700;font-style:normal;color:#5597D0;left:1440.00px;top:641px;">A</span>
<span style="position:absolute;white-space:pre;line-height:20px;font-size:16px;font-weight:400;font-style:normal;color:#6FA6D9;left:1452.05px;top:641px;">:</span>
<span style="position:absolute;white-space:pre;line-height:20px;font-size:16px;font-weight:400;font-style:normal;color:#151515;left:1457.90px;top:641px;transform:scaleX(0.9683);transform-origin:0 0;-webkit-text-stroke:0.02px #151515;">Alter Column</span>
<span style="position:absolute;white-space:pre;line-height:20px;font-size:16px;font-weight:700;font-style:normal;color:#A9A9A9;left:1439.40px;top:672px;">D</span>
<span style="position:absolute;white-space:pre;line-height:20px;font-size:16px;font-weight:400;font-style:normal;color:#B5B5B5;left:1451.45px;top:672px;">:</span>
<span style="position:absolute;white-space:pre;line-height:20px;font-size:16px;font-weight:400;font-style:normal;color:#ABABAB;left:1457.91px;top:672px;transform:scaleX(0.9903);transform-origin:0 0;">Delete Column</span>
<span style="position:absolute;white-space:pre;line-height:20px;font-size:16px;font-weight:700;font-style:normal;color:#5597D0;left:1439.40px;top:703px;">N</span>
<span style="position:absolute;white-space:pre;line-height:20px;font-size:16px;font-weight:400;font-style:normal;color:#6FA6D9;left:1451.45px;top:703px;">:</span>
<span style="position:absolute;white-space:pre;line-height:20px;font-size:16px;font-weight:400;font-style:normal;color:#151515;left:1458.70px;top:703px;transform:scaleX(0.9738);transform-origin:0 0;">Auto Column</span>
<span style="position:absolute;white-space:pre;line-height:20px;font-size:16px;font-weight:700;font-style:normal;color:#5597D0;left:1440.00px;top:734px;">A</span>
<span style="position:absolute;white-space:pre;line-height:20px;font-size:16px;font-weight:400;font-style:normal;color:#6FA6D9;left:1452.05px;top:734px;">:</span>
<span style="position:absolute;white-space:pre;line-height:20px;font-size:16px;font-weight:400;font-style:normal;color:#151515;left:1456.72px;top:734px;transform:scaleX(0.9819);transform-origin:0 0;">UnSplit Purchase</span>
<span style="position:absolute;white-space:pre;line-height:20px;font-size:16px;font-weight:400;font-style:normal;color:#151515;left:1457.90px;top:753px;transform:scaleX(0.9795);transform-origin:0 0;">/Sales</span>
<span style="position:absolute;white-space:pre;line-height:20px;font-size:16px;font-weight:700;font-style:normal;color:#5597D0;left:1439.40px;top:824px;">F12</span>
<span style="position:absolute;white-space:pre;line-height:20px;font-size:16px;font-weight:400;font-style:normal;color:#5597D0;left:1467.27px;top:824px;-webkit-text-stroke:0.25px #5597D0;">:</span>
<span style="position:absolute;white-space:pre;line-height:20px;font-size:16px;font-weight:400;font-style:normal;color:#151515;left:1475.62px;top:824px;transform:scaleX(0.9809);transform-origin:0 0;">Configure</span>
<div style="position:absolute;left:-1px;top:195px;width:1441px;height:201px;border:5px solid #EC1C25"></div>
<div style="position:absolute;left:0;top:817px;width:1427px;height:27px;border-top:5px solid #EC1C25;border-right:5px solid #EC1C25"></div>
</div></body></html>
